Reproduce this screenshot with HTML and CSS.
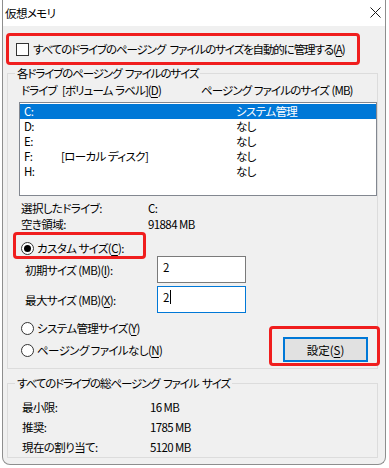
FILE: index.html
```html
<!DOCTYPE html>
<html lang="ja">
<head>
    <meta charset="UTF-8">
    <title>仮想メモリ</title>
    <link rel="stylesheet" href="styles.css">
</head>
<body>
    <div class="window">
        <div class="titlebar">
            <span class="title">仮想メモリ</span>
            <svg class="close" width="11" height="11" viewBox="0 0 11 11">
                <path d="M0.5 0.5 L10.5 10.5 M10.5 0.5 L0.5 10.5" stroke="#1a1a1a" stroke-width="1" fill="none"/>
            </svg>
        </div>

        <!-- Auto manage checkbox -->
        <div class="mark auto-row">
            <span class="checkbox"></span>
            <span class="auto-text">すべてのドライブのページング&nbsp;ファイルのサイズを自動的に管理する(<u>A</u>)</span>
        </div>

        <!-- Per drive settings -->
        <fieldset class="group drives">
            <legend>各ドライブのページング ファイルのサイズ</legend>
            <div class="list-head">
                <span>ドライブ&nbsp; [ボリューム ラベル](<u>D</u>)</span>
                <span>ページング ファイルのサイズ (MB)</span>
            </div>
            <div class="listbox">
                <div class="row selected"><span>C:</span><span></span><span>システム管理</span></div>
                <div class="row"><span>D:</span><span></span><span>なし</span></div>
                <div class="row"><span>E:</span><span></span><span>なし</span></div>
                <div class="row"><span>F:</span><span>[ローカル ディスク]</span><span>なし</span></div>
                <div class="row"><span>H:</span><span></span><span>なし</span></div>
            </div>
            <div class="info">
                <span>選択したドライブ:</span><span>C:</span>
                <span>空き領域:</span><span>91884 MB</span>
            </div>
            <div class="mark custom">
                <span class="radio checked"></span>
                <span>カスタム サイズ(<u>C</u>):</span>
            </div>
            <div class="size-row first">
                <span class="size-label">初期サイズ (MB)(<u>I</u>):</span>
                <div class="textbox">2</div>
            </div>
            <div class="size-row">
                <span class="size-label">最大サイズ (MB)(<u>X</u>):</span>
                <div class="textbox focused">2<span class="caret"></span></div>
            </div>
            <div class="lower">
                <div class="radios">
                    <div class="radio-row"><span class="radio"></span><span>システム管理サイズ(<u>Y</u>)</span></div>
                    <div class="radio-row"><span class="radio"></span><span>ページング ファイルなし(<u>N</u>)</span></div>
                </div>
                <div class="mark set-box">
                    <button class="set-btn">設定(<u>S</u>)</button>
                </div>
            </div>
        </fieldset>

        <!-- Totals -->
        <fieldset class="group totals">
            <legend>すべてのドライブの総ページング ファイル サイズ</legend>
            <div class="total-grid">
                <span>最小限:</span><span>16 MB</span>
                <span>推奨:</span><span>1785 MB</span>
                <span>現在の割り当て:</span><span>5120 MB</span>
            </div>
        </fieldset>
    </div>
</body>
</html>
```

FILE: styles.css
```css
* {
    margin: 0;
    padding: 0;
    box-sizing: border-box;
}

body {
    background: #fff;
    color: #000;
    font-family: "Noto Sans CJK JP", sans-serif;
    font-size: 11.5px;
    letter-spacing: -0.6px;
    line-height: 16px;
    font-feature-settings: "palt";
}

u {
    text-underline-offset: 2px;
}

.window {
    margin-left: 2px;
    width: 384px;
    height: 465px;
    background: #f0f0f0;
    border: 1px solid #8e8e8e;
    border-top: none;
    border-radius: 0 0 8px 8px;
    overflow: hidden;
}

.titlebar {
    height: 26px;
    background: #fff;
    display: flex;
    align-items: center;
    justify-content: space-between;
    padding: 0 4px 0 2px;
}

.close {
    margin-top: -2px;
}

/* red annotation frames */
.mark {
    border: 3px solid #f01e1e;
    border-radius: 4px;
}

.auto-row {
    margin: 7px 0 0 3px;
    width: 354px;
    height: 32px;
    display: flex;
    align-items: center;
    gap: 4px;
    padding-left: 7px;
}

.auto-text {
    white-space: nowrap;
    letter-spacing: -1.1px;
    word-spacing: 3px;
}

.checkbox {
    flex: none;
    width: 13px;
    height: 13px;
    border: 1px solid #333;
    background: #fff;
}

.radio {
    flex: none;
    width: 13px;
    height: 13px;
    border: 1px solid #333;
    border-radius: 50%;
    background: #fff;
    display: flex;
    align-items: center;
    justify-content: center;
}

.radio.checked::after {
    content: "";
    width: 7px;
    height: 7px;
    border-radius: 50%;
    background: #000;
}

.group {
    margin-left: 4px;
    width: 371px;
    min-width: 0;
    border: 1px solid #dcdcdc;
}

.group legend {
    margin-left: 7px;
    padding: 0 2px;
    line-height: 16px;
    letter-spacing: -1.1px;
    word-spacing: 2px;
}

.drives {
    padding-bottom: 2px;
}

.list-head {
    margin-top: 1px;
    padding-left: 13px;
    display: grid;
    grid-template-columns: 180px 1fr;
    letter-spacing: -0.9px;
    word-spacing: 1px;
}

.listbox {
    margin: 4px 0 0 11px;
    width: 358px;
    height: 94px;
    border: 1px solid #828790;
    background: #fff;
    padding-top: 1px;
}

.row {
    height: 15px;
    line-height: 15px;
    display: grid;
    grid-template-columns: 37px 175px 1fr;
    padding-left: 4px;
}

.row.selected {
    background: #0078d7;
    color: #fff;
}

.info {
    margin-top: 4px;
    padding-left: 13px;
    display: grid;
    grid-template-columns: 127px 1fr;
}

.custom {
    margin-left: 5px;
    width: 133px;
    height: 27px;
    padding: 5px 0 0 5px;
    display: flex;
    align-items: center;
    gap: 3px;
}

.size-row {
    margin-top: 3px;
    padding-left: 17px;
    height: 27px;
    display: flex;
    align-items: center;
}

.size-row.first {
    margin-top: -3px;
}

.size-label {
    width: 132px;
}

.textbox {
    width: 89px;
    height: 27px;
    border: 1px solid #7a7a7a;
    background: #fff;
    padding: 2px 0 0 5px;
    display: flex;
    align-items: flex-start;
}

.textbox.focused {
    border-color: #0078d7;
}

.caret {
    width: 1px;
    height: 14px;
    margin: 1px 0 0 1px;
    background: #000;
}

.lower {
    display: flex;
    justify-content: space-between;
    align-items: flex-start;
}

.radios {
    padding: 4px 0 0 13px;
}

.radio-row {
    height: 22px;
    display: flex;
    align-items: center;
    gap: 3px;
}

.set-box {
    margin: 13px -3px 0 0;
    width: 111px;
    height: 40px;
    padding: 8px 0 0 11px;
}

.set-btn {
    width: 85px;
    height: 25px;
    background: #e1e1e1;
    border: 2px solid #0078d7;
    font: inherit;
    color: #000;
    display: flex;
    align-items: center;
    justify-content: center;
}

.totals {
    margin-top: 6px;
}

.total-grid {
    padding: 6px 0 0 14px;
    display: grid;
    grid-template-columns: 128px 1fr;
    line-height: 20px;
}
```
